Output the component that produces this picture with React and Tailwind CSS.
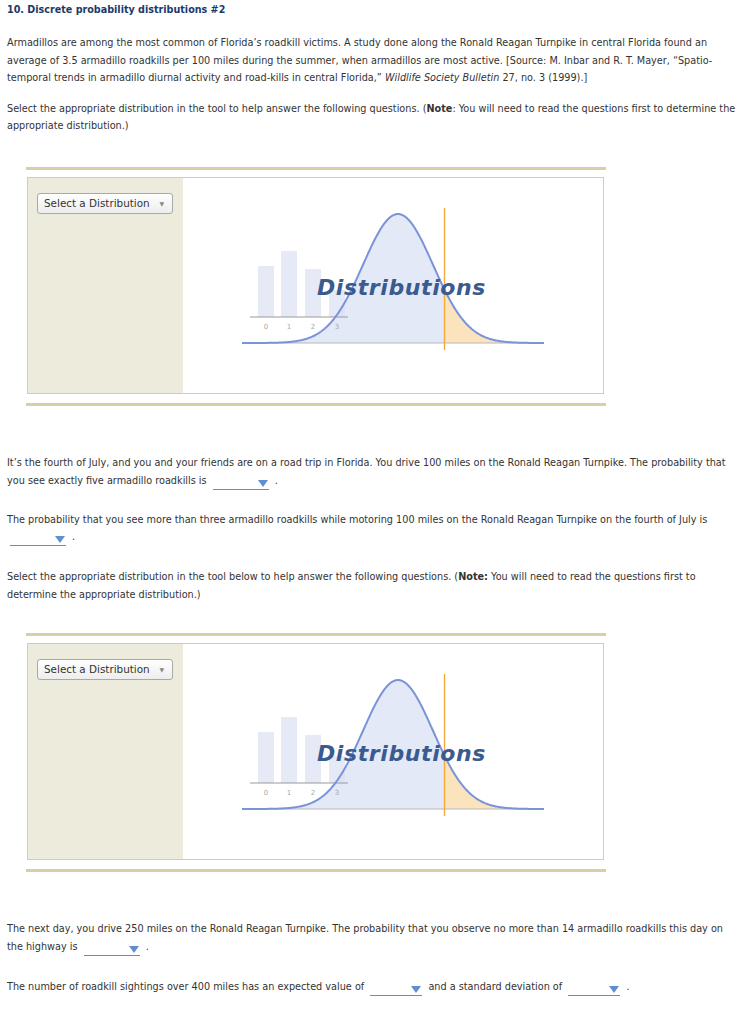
import React from 'react'

const font = { fontFamily: '"DejaVu Sans", Verdana, sans-serif' }

function bellPath(mean, sigma, top, base, from, to, close = false) {
  const pts = []
  for (let x = from; x <= to; x += 1) {
    const y = base - (base - top) * Math.exp(-((x - mean) ** 2) / (2 * sigma * sigma))
    pts.push(`${x.toFixed(1)},${y.toFixed(2)}`)
  }
  let d = 'M' + pts.join(' L')
  if (close) d += ` L${to},${base} L${from},${base} Z`
  return d
}

function Chart() {
  const mean = 215
  const sigma = 35
  const top = 36
  const base = 165
  return (
    <svg width="420" height="214" viewBox="0 0 420 214" className="block">
      {/* bars */}
      <g fill="#e6e9f6">
        <rect x="75" y="88" width="16" height="51" />
        <rect x="98" y="73" width="16" height="66" />
        <rect x="122" y="91" width="16" height="48" />
        <rect x="146" y="112" width="16" height="27" />
      </g>
      {/* filled areas */}
      <path d={bellPath(mean, sigma, top, base, 59, 261, true)} fill="#d9dff4" fillOpacity="0.7" />
      <path d={bellPath(mean, sigma, top, base, 261, 361, true)} fill="#fae3bd" />
      <line x1="67" y1="139" x2="165" y2="139" stroke="#9a9a9a" strokeWidth="1" />
      <g fill="#a8a8a8" fontSize="7" fontFamily="DejaVu Sans, sans-serif" textAnchor="middle">
        <text x="83" y="151">0</text>
        <text x="106" y="151">1</text>
        <text x="130" y="151">2</text>
        <text x="154" y="151">3</text>
      </g>
      <line x1="59" y1="165" x2="361" y2="165" stroke="#b8b8b8" strokeWidth="1" />
      <path d={bellPath(mean, sigma, top, base, 59, 361)} fill="none" stroke="#7a93d9" strokeWidth="2" />
      <line x1="261.5" y1="30" x2="261.5" y2="172" stroke="#f6aa3c" strokeWidth="1.4" />
      <text
        x="134"
        y="117"
        fill="#3a5b8f"
        fontSize="22"
        fontWeight="bold"
        fontStyle="italic"
        fontFamily="DejaVu Sans, Verdana, sans-serif"
        letterSpacing="0.6"
      >
        Distributions
      </text>
    </svg>
  )
}

function Tool() {
  return (
    <div className="w-[580px] ml-[19px]">
      <div className="h-[3px] bg-[#d9cfa6]" />
      <div className="mt-[7px] ml-px w-[577px] h-[217px] border border-[#cccccc] flex">
        <div className="w-[156px] bg-[#ecebdc] pt-[15px] pl-[9px]">
          <div className="w-[136px] h-[21px] rounded-[3px] border border-[#a9a9a9] bg-gradient-to-b from-white to-[#ededed] flex items-center justify-between pl-[6px] pr-[8px] text-[10.4px] text-[#333]">
            <span>Select a Distribution</span>
            <span className="text-[6px] text-[#888]">▼</span>
          </div>
        </div>
        <div className="flex-1 bg-white">
          <Chart />
        </div>
      </div>
      <div className="mt-[9px] h-[3px] bg-[#d9cfa6]" />
    </div>
  )
}

function Blank({ w = 56 }) {
  return (
    <span
      className="inline-flex items-end justify-end border-b border-[#5f8fd1] align-[-3px] h-[13px] mx-[3px]"
      style={{ width: w }}
    >
      <svg width="10" height="7" viewBox="0 0 10 7" className="mb-[2px] mr-[1px]">
        <path d="M0 0 L10 0 L5 7 Z" fill="#5f8fd1" />
      </svg>
    </span>
  )
}

export default function App() {
  return (
    <div className="px-[7px] pt-[1px] pb-4 text-[9.7px] leading-[17.6px] text-[#333]" style={font}>
      <h2 className="text-[9.6px] font-bold text-[#1b3a6b] leading-[17px]">10. Discrete probability distributions #2</h2>

      <p className="mt-[16px]">
        Armadillos are among the most common of Florida’s roadkill victims. A study done along the Ronald Reagan Turnpike in central Florida found an average of 3.5 armadillo roadkills per 100 miles during the summer, when armadillos are most active. [Source: M. Inbar and R. T. Mayer, “Spatio-temporal trends in armadillo diurnal activity and road-kills in central Florida,” <i>Wildlife Society Bulletin</i> 27, no. 3 (1999).]
      </p>
      <p className="mt-[13px]">
        Select the appropriate distribution in the tool to help answer the following questions. (<b>Note</b>: You will need to read the questions first to determine the appropriate distribution.)
      </p>

      <div className="mt-[32px]">
        <Tool />
      </div>

      <p className="mt-[48px]">
        It’s the fourth of July, and you and your friends are on a road trip in Florida. You drive 100 miles on the Ronald Reagan Turnpike. The probability that you see exactly five armadillo roadkills is <Blank /> .
      </p>
      <p className="mt-[21px]">
        The probability that you see more than three armadillo roadkills while motoring 100 miles on the Ronald Reagan Turnpike on the fourth of July is <br />
        <Blank /> .
      </p>
      <p className="mt-[22px]">
        Select the appropriate distribution in the tool below to help answer the following questions. (<b>Note:</b> You will need to read the questions first to determine the appropriate distribution.)
      </p>

      <div className="mt-[30px]">
        <Tool />
      </div>

      <p className="mt-[48px]">
        The next day, you drive 250 miles on the Ronald Reagan Turnpike. The probability that you observe no more than 14 armadillo roadkills this day on the highway is <Blank /> .
      </p>
      <p className="mt-[22px]">
        The number of roadkill sightings over 400 miles has an expected value of <Blank w={52} /> and a standard deviation of <Blank w={52} /> .
      </p>
    </div>
  )
}
